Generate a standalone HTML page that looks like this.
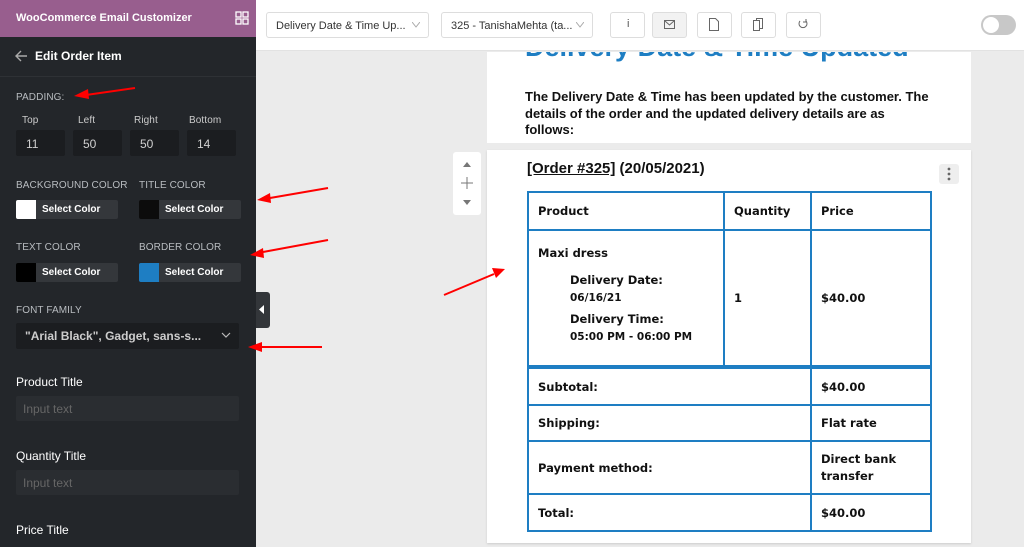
<!DOCTYPE html>
<html><head><meta charset="utf-8"><style>
*{box-sizing:border-box;margin:0;padding:0}
body{width:1024px;height:547px;overflow:hidden;background:#ebebeb;font-family:"Liberation Sans",sans-serif;position:relative}
.a{position:absolute}
.sb{left:0;top:0;width:256px;height:547px;background:#23262a;color:#ddd}
.lab{font-size:10px;color:#b8bcc0;letter-spacing:.1px}
.inp{background:#1b1d20;border-radius:2px;color:#d0d0d0;font-size:12px}
.cs{height:19px;width:102px;background:#34373b;border-radius:2px;font-size:10px;color:#fff;font-weight:bold}
.cs i{position:absolute;left:0;top:0;width:20px;height:19px;border-radius:2px 0 0 2px}
.cs span{position:absolute;left:26px;top:4px}
.btn{top:12px;width:35px;height:26px;border:1px solid #ddd;border-radius:3px;background:#fff}
.sel{top:12px;height:26px;border:1px solid #ddd;border-radius:3px;background:#fff;font-size:11px;color:#333;padding:7px 0 0 9px}
td{border:2px solid #1e7ec3;font-family:"DejaVu Sans","Liberation Sans",sans-serif;font-weight:bold;font-size:11.5px;color:#111;padding:0 9px;vertical-align:middle}
table{border-collapse:collapse}
</style></head><body>
<div class="a sb">
 <div class="a" style="left:0;top:0;width:256px;height:37px;background:#985e8e"></div>
 <div class="a" style="left:16px;top:12px;font-size:11px;font-weight:bold;color:#fff">WooCommerce Email Customizer</div>
 <svg class="a" style="left:235px;top:11px" width="14" height="14" fill="none" stroke="#fff" stroke-width="1.3"><rect x="1" y="1" width="5" height="5"/><rect x="8" y="1" width="5" height="5"/><rect x="1" y="8" width="5" height="5"/><rect x="8" y="8" width="5" height="5"/></svg>
 <div class="a" style="left:0;top:76px;width:256px;height:1px;background:#2e3135"></div>
 <svg class="a" style="left:14px;top:50px" width="14" height="12" fill="none" stroke="#aaa" stroke-width="1.4"><path d="M13 6H2M7 1L2 6l5 5"/></svg>
 <div class="a" style="left:35px;top:49px;font-size:12px;font-weight:bold;color:#fff">Edit Order Item</div>
 <div class="a lab" style="left:16px;top:92px">PADDING:</div>
 <div class="a lab" style="left:22px;top:115px;color:#ccc">Top</div>
 <div class="a lab" style="left:78px;top:115px;color:#ccc">Left</div>
 <div class="a lab" style="left:134px;top:115px;color:#ccc">Right</div>
 <div class="a lab" style="left:189px;top:115px;color:#ccc">Bottom</div>
 <div class="a inp" style="left:16px;top:130px;width:49px;height:26px;padding:7px 0 0 10px">11</div>
 <div class="a inp" style="left:73px;top:130px;width:49px;height:26px;padding:7px 0 0 10px">50</div>
 <div class="a inp" style="left:130px;top:130px;width:49px;height:26px;padding:7px 0 0 10px">50</div>
 <div class="a inp" style="left:187px;top:130px;width:49px;height:26px;padding:7px 0 0 10px">14</div>
 <div class="a lab" style="left:16px;top:180px">BACKGROUND COLOR</div>
 <div class="a lab" style="left:139px;top:180px">TITLE COLOR</div>
 <div class="a cs" style="left:16px;top:200px"><i style="background:#fff"></i><span>Select Color</span></div>
 <div class="a cs" style="left:139px;top:200px"><i style="background:#0c0c0c"></i><span>Select Color</span></div>
 <div class="a lab" style="left:16px;top:242px">TEXT COLOR</div>
 <div class="a lab" style="left:139px;top:242px">BORDER COLOR</div>
 <div class="a cs" style="left:16px;top:263px"><i style="background:#000"></i><span>Select Color</span></div>
 <div class="a cs" style="left:139px;top:263px"><i style="background:#1e7ec3"></i><span>Select Color</span></div>
 <div class="a lab" style="left:16px;top:305px">FONT FAMILY</div>
 <div class="a inp" style="left:16px;top:323px;width:223px;height:26px;padding:6px 0 0 9px;font-weight:bold;font-size:12px;color:#ccc">"Arial Black", Gadget, sans-s...</div>
 <svg class="a" style="left:221px;top:332px" width="10" height="7" fill="none" stroke="#bbb" stroke-width="1.2"><path d="M1 1l4 4 4-4"/></svg>
 <div class="a" style="left:16px;top:375px;font-size:12px;color:#fff">Product Title</div>
 <div class="a inp" style="left:16px;top:396px;width:223px;height:25px;padding:6px 0 0 7px;background:#2a2d31;color:#666">Input text</div>
 <div class="a" style="left:16px;top:449px;font-size:12px;color:#fff">Quantity Title</div>
 <div class="a inp" style="left:16px;top:470px;width:223px;height:25px;padding:6px 0 0 7px;background:#2a2d31;color:#666">Input text</div>
 <div class="a" style="left:16px;top:523px;font-size:12px;color:#fff">Price Title</div>
</div>
<div class="a" style="left:256px;top:292px;width:14px;height:36px;background:#33363a;border-radius:0 3px 3px 0"></div>
<svg class="a" style="left:259px;top:305px" width="6" height="9"><path d="M5 0L0 4.5 5 9z" fill="#fff"/></svg>
<div class="a" style="left:256px;top:0;width:768px;height:51px;background:#fff;border-bottom:1px solid #e2e2e2"></div>
<div class="a sel" style="left:266px;width:163px">Delivery Date &amp; Time Up...</div>
<div class="a sel" style="left:441px;width:152px">325 - TanishaMehta (ta...</div>
<svg class="a" style="left:412px;top:22px" width="8" height="6" fill="none" stroke="#aaa"><path d="M0 0l4 5 4-5"/></svg>
<svg class="a" style="left:576px;top:22px" width="8" height="6" fill="none" stroke="#aaa"><path d="M0 0l4 5 4-5"/></svg>
<div class="a btn" style="left:610px"></div><div class="a" style="left:627px;top:18px;font-size:11px;color:#555">i</div>
<div class="a btn" style="left:652px;background:#f2f2f2"></div><svg class="a" style="left:664px;top:20px" width="11" height="9" fill="none" stroke="#666"><rect x=".5" y=".5" width="10" height="8"/><path d="M1 1l4.5 4 4.5-4"/></svg>
<div class="a btn" style="left:697px"></div><svg class="a" style="left:709px;top:18px" width="10" height="13" fill="none" stroke="#666"><path d="M.5.5h6l3 3v9h-9z"/></svg>
<div class="a btn" style="left:741px"></div><svg class="a" style="left:753px;top:18px" width="11" height="13" fill="none" stroke="#666"><rect x="3.5" y=".5" width="6" height="10"/><rect x=".5" y="2.5" width="6" height="10" fill="#fff"/></svg>
<div class="a btn" style="left:786px"></div><svg class="a" style="left:797px;top:18px" width="12" height="12" fill="none" stroke="#666"><path d="M3 3a4 4 0 1 0 6 0M9 1v3h-3"/></svg>
<div class="a" style="left:981px;top:15px;width:35px;height:20px;border-radius:10px;background:#c8c8c8"></div>
<div class="a" style="left:983px;top:17px;width:16px;height:16px;border-radius:8px;background:#fff"></div>
<div class="a" style="left:487px;top:52px;width:484px;height:91px;background:#fff;overflow:hidden">
 <div class="a" style="left:38px;top:-20px;font-size:27px;font-weight:bold;color:#1e7ec3;white-space:nowrap">Delivery Date &amp; Time Updated</div>
 <div class="a" style="left:38px;top:37px;font-size:13px;font-weight:bold;line-height:16.5px;color:#111;white-space:nowrap">The Delivery Date &amp; Time has been updated by the customer. The<br>details of the order and the updated delivery details are as<br>follows:</div>
</div>
<div class="a" style="left:453px;top:152px;width:28px;height:63px;background:#fff;border-radius:3px"></div>
<svg class="a" style="left:460px;top:159px" width="14" height="50" fill="#777"><path d="M3 8l4-5 4 5z"/><path d="M7 18v12M1 24h12" stroke="#777" fill="none"/><path d="M3 41l4 5 4-5z"/></svg>
<div class="a" style="left:487px;top:150px;width:484px;height:393px;background:#fff;box-shadow:0 1px 2px #ccc"></div>
<div class="a" style="left:939px;top:164px;width:20px;height:20px;background:#eee;border-radius:3px"></div>
<svg class="a" style="left:947px;top:167px" width="4" height="14" fill="#666"><circle cx="2" cy="2" r="1.4"/><circle cx="2" cy="7" r="1.4"/><circle cx="2" cy="12" r="1.4"/></svg>
<div class="a" style="left:527px;top:160px;font-size:15px;font-weight:bold;color:#111"><u>[Order #325]</u> (20/05/2021)</div>
<table class="a" style="left:527px;top:191px;width:405px">
<tr style="height:38px"><td style="width:196px">Product</td><td style="width:87px">Quantity</td><td>Price</td></tr>
<tr style="height:137px"><td style="vertical-align:top;padding-top:14px;line-height:17px">Maxi dress<div style="padding-left:32px;margin-top:10px;line-height:17px">Delivery Date:<br><span style="font-size:10.5px">06/16/21</span><div style="margin-top:4px">Delivery Time:</div><span style="font-size:10.5px">05:00 PM - 06:00 PM</span></div></td><td>1</td><td>$40.00</td></tr>
<tr style="height:38px;border-top:4px solid #1e7ec3"><td colspan="2">Subtotal:</td><td>$40.00</td></tr>
<tr style="height:36px"><td colspan="2">Shipping:</td><td>Flat rate</td></tr>
<tr style="height:53px"><td colspan="2">Payment method:</td><td style="line-height:17px">Direct bank transfer</td></tr>
<tr style="height:37px"><td colspan="2">Total:</td><td>$40.00</td></tr>
</table>
<svg class="a" style="left:0;top:0" width="1024" height="547" fill="#f00" stroke="#f00" stroke-width="2">
<path d="M135 88L86 95"/><path d="M74 96l14-7 1 10z" stroke="none"/>
<path d="M328 188L270 198"/><path d="M257 200l13-7 1 10z" stroke="none"/>
<path d="M328 240L263 252"/><path d="M250 255l13-7 1 10z" stroke="none"/>
<path d="M322 347H262"/><path d="M248 347l14-5v10z" stroke="none"/>
<path d="M444 295L494 274"/><path d="M505 269l-13-1 4 10z" stroke="none"/>
</svg>
</body></html>
